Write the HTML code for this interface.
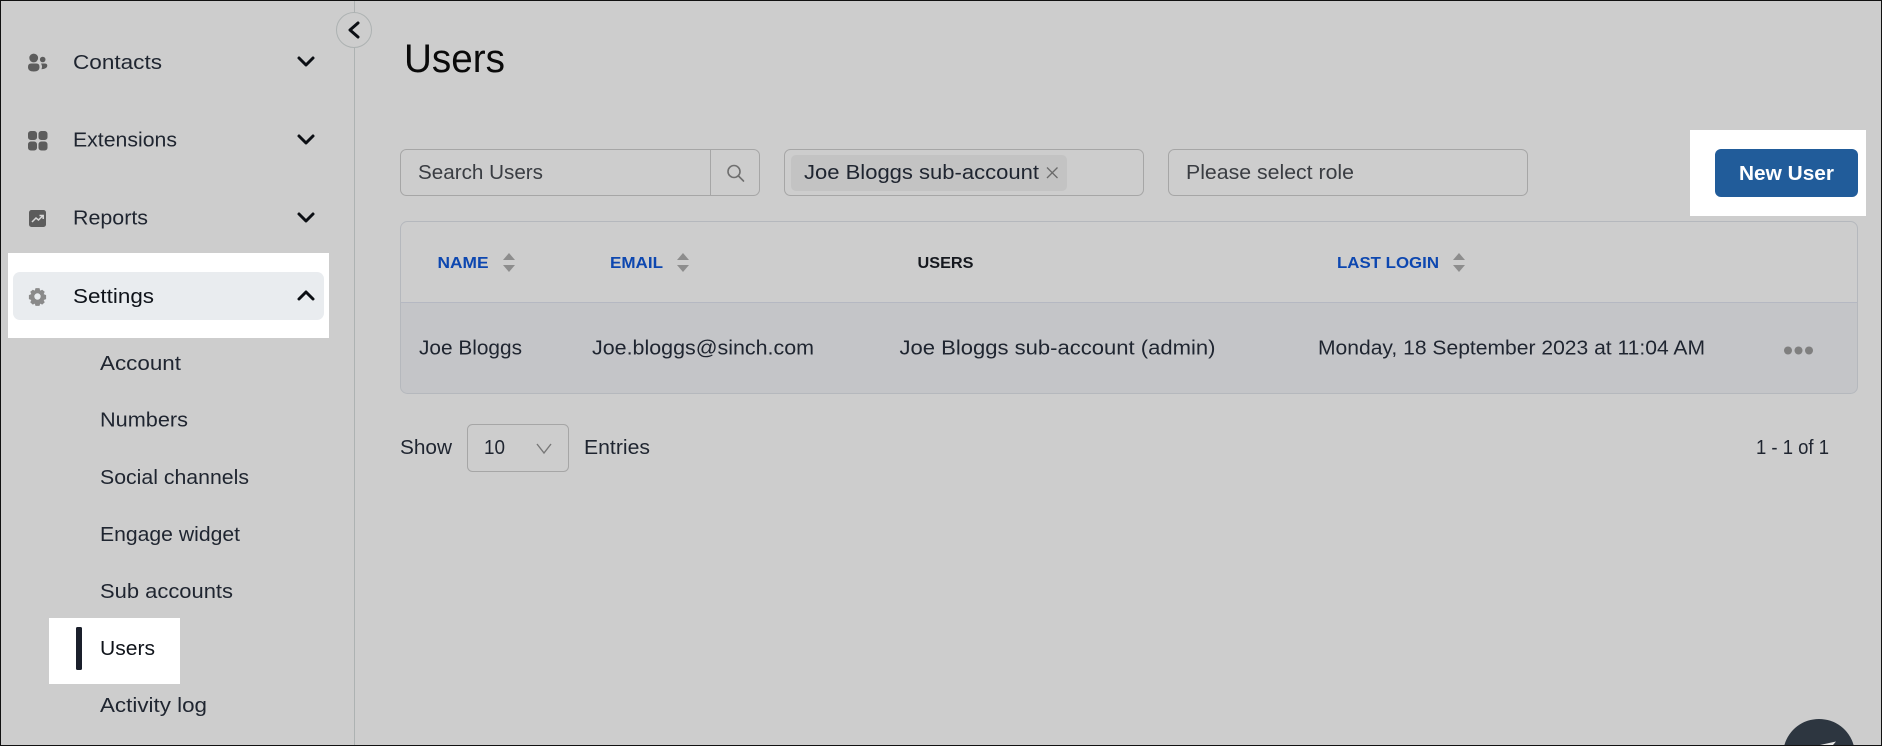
<!DOCTYPE html>
<html lang="en">
<head>
<meta charset="utf-8">
<title>Users</title>
<style>
html,body{margin:0;padding:0;background:#cdcdcd;width:1882px;height:746px;overflow:hidden;}
svg{display:block;overflow:hidden;}
text{font-family:"Liberation Sans",sans-serif;font-size:20px;fill:#1f2530;}
.b{font-weight:700;}
.h{font-size:16px;font-weight:700;fill:#0d47b0;}
</style>
</head>
<body>
<svg xmlns="http://www.w3.org/2000/svg" width="1882" height="746" viewBox="0 0 1882 746">
<rect width="1882" height="746" fill="#cdcdcd"/>

<!-- sidebar divider -->
<rect x="354" y="0" width="1" height="746" fill="#adb2b2"/>
<circle cx="354" cy="30" r="17.5" fill="#cdcdcd" stroke="#adb2b2"/>
<path d="M358 23l-8 7 8 7" fill="none" stroke="#0c0f14" stroke-width="3" stroke-linecap="round" stroke-linejoin="round"/>

<!-- highlights -->
<rect x="8" y="253" width="321" height="85" fill="#fff"/>
<rect x="13" y="272" width="311" height="48" rx="7" fill="#e9ecef"/>
<rect x="49" y="618" width="131" height="66" fill="#fff"/>
<rect x="76" y="627" width="6" height="43" rx="1.5" fill="#1a1f2b"/>
<rect x="1690" y="130" width="176" height="86" fill="#fff"/>

<!-- sidebar icons -->
<g fill="#5c5c5c">
  <circle cx="33.700" cy="58" r="4.400"/>
  <path d="M28 67q0-3.500 3-3.500h5.500q3 0 3 3.500q0 4.500-5.750 4.500t-5.750-4.500z"/>
  <circle cx="42.700" cy="59.500" r="2.800"/>
  <path d="M41 63.500h3.500q2.800 0 2.800 2.200q0 3-5.800 3.500q1.200-3-.5-5.700z"/>
  <rect x="28" y="131" width="9" height="9" rx="2.800"/>
  <rect x="38.500" y="131" width="9" height="9" rx="2.800"/>
  <rect x="28" y="141.500" width="9" height="9" rx="2.800"/>
  <rect x="38.500" y="141.500" width="9" height="9" rx="2.800"/>
  <rect x="29" y="210" width="17" height="17" rx="2.500"/>
</g>
<path d="M32 222l4-4 2.500 2 4.500-4.500M39.500 215.500h3.700v3.500" fill="none" stroke="#d8d8d8" stroke-width="1.500"/>
<g transform="translate(37.500 296.500)">
  <path d="M-2-8.400h4l.7 2.500 2-.9 2.500 2.100-1 2.300 2.400 1v4l-2.400.9 1 2.400-2.500 2.200-2-1-.7 2.300h-4l-.7-2.300-2 1-2.500-2.200 1-2.400-2.400-.9v-4l2.400-1-1-2.300 2.500-2.100 2 .9z" fill="#8a8a8a"/>
  <circle cx="0" cy="0" r="3.200" fill="#e9ecef"/>
</g>

<!-- sidebar chevrons -->
<g fill="none" stroke="#0c0f14" stroke-width="3" stroke-linecap="round" stroke-linejoin="round">
  <path d="M299 58l7 7 7-7"/>
  <path d="M299 136l7 7 7-7"/>
  <path d="M299 214l7 7 7-7"/>
  <path d="M299 299l7-7 7 7"/>
</g>

<!-- sidebar text -->
<text x="73" y="69" textLength="89" lengthAdjust="spacingAndGlyphs">Contacts</text>
<text x="73" y="146.500" textLength="104" lengthAdjust="spacingAndGlyphs">Extensions</text>
<text x="73" y="224.500" textLength="75" lengthAdjust="spacingAndGlyphs">Reports</text>
<text x="73" y="303" textLength="81" lengthAdjust="spacingAndGlyphs" style="fill:#0f131a">Settings</text>
<text x="100" y="370" textLength="81" lengthAdjust="spacingAndGlyphs">Account</text>
<text x="100" y="426.500" textLength="88" lengthAdjust="spacingAndGlyphs">Numbers</text>
<text x="100" y="484" textLength="149" lengthAdjust="spacingAndGlyphs">Social channels</text>
<text x="100" y="541" textLength="140" lengthAdjust="spacingAndGlyphs">Engage widget</text>
<text x="100" y="598" textLength="133" lengthAdjust="spacingAndGlyphs">Sub accounts</text>
<text x="100" y="655" textLength="55" lengthAdjust="spacingAndGlyphs" style="fill:#0f131a">Users</text>
<text x="100" y="712" textLength="107" lengthAdjust="spacingAndGlyphs">Activity log</text>

<!-- title -->
<text x="404" y="72" textLength="101" lengthAdjust="spacingAndGlyphs" style="font-size:40px;fill:#0a0a0a">Users</text>

<!-- search -->
<rect x="400.500" y="149.500" width="359" height="46" rx="6" fill="none" stroke="#a6a6a6"/>
<rect x="710" y="150" width="1" height="45" fill="#a6a6a6"/>
<text x="418" y="179" textLength="125" lengthAdjust="spacingAndGlyphs" style="fill:#3a3d42">Search Users</text>
<g fill="none" stroke="#6f6f6f" stroke-width="1.600" stroke-linecap="round">
  <circle cx="734" cy="171.500" r="6"/>
  <path d="M738.500 176l5 5"/>
</g>

<!-- tag filter -->
<rect x="784.500" y="149.500" width="359" height="46" rx="6" fill="none" stroke="#a6a6a6"/>
<rect x="791" y="155" width="276" height="36" rx="5" fill="#c3c3c3"/>
<text x="804" y="179" textLength="235" lengthAdjust="spacingAndGlyphs">Joe Bloggs sub-account</text>
<path d="M1047 167.500l10.500 10.500M1057.500 167.500l-10.500 10.500" fill="none" stroke="#6a6a6a" stroke-width="1.300"/>

<!-- role -->
<rect x="1168.500" y="149.500" width="359" height="46" rx="6" fill="none" stroke="#a6a6a6"/>
<text x="1186" y="179" textLength="168" lengthAdjust="spacingAndGlyphs" style="fill:#3a3d42">Please select role</text>

<!-- new user -->
<rect x="1715" y="149" width="143" height="48" rx="6" fill="#215c9a"/>
<text x="1739" y="180" class="b" textLength="95" lengthAdjust="spacingAndGlyphs" style="fill:#fff">New User</text>

<!-- table -->
<path d="M401 302.500H1857.500V386.500a7 7 0 0 1-7 7H407.500a7 7 0 0 1-6.500-7z" fill="#c4c5c8"/>
<rect x="400.500" y="221.500" width="1457" height="172" rx="7" fill="none" stroke="#b5b8bd"/>
<rect x="401" y="302" width="1456" height="1" fill="#b5b8c2"/>

<text x="437.500" y="268" class="h" textLength="51" lengthAdjust="spacingAndGlyphs">NAME</text>
<text x="610" y="268" class="h" textLength="53" lengthAdjust="spacingAndGlyphs">EMAIL</text>
<text x="917.500" y="268" class="h" textLength="56" lengthAdjust="spacingAndGlyphs" style="fill:#15181e">USERS</text>
<text x="1337" y="268" class="h" textLength="102" lengthAdjust="spacingAndGlyphs">LAST LOGIN</text>
<g fill="#8d8d8d">
  <path d="M509 253l6 7h-12zM503 265h12l-6 7z"/>
  <path d="M683 253l6 7h-12zM677 265h12l-6 7z"/>
  <path d="M1459 253l6 7h-12zM1453 265h12l-6 7z"/>
</g>

<text x="419" y="354.500" textLength="103" lengthAdjust="spacingAndGlyphs">Joe Bloggs</text>
<text x="592" y="354.500" textLength="222" lengthAdjust="spacingAndGlyphs">Joe.bloggs@sinch.com</text>
<text x="899.500" y="354.500" textLength="316" lengthAdjust="spacingAndGlyphs">Joe Bloggs sub-account (admin)</text>
<text x="1318" y="354.500" textLength="387" lengthAdjust="spacingAndGlyphs">Monday, 18 September 2023 at 11:04 AM</text>
<g fill="#7f7f7f">
  <circle cx="1788" cy="350.500" r="4"/>
  <circle cx="1798.500" cy="350.500" r="4"/>
  <circle cx="1809" cy="350.500" r="4"/>
</g>

<!-- pagination -->
<text x="400" y="454" textLength="52" lengthAdjust="spacingAndGlyphs">Show</text>
<rect x="467.500" y="424.500" width="101" height="47" rx="5" fill="none" stroke="#a6a6a6"/>
<text x="484" y="454" textLength="21" lengthAdjust="spacingAndGlyphs">10</text>
<path d="M537 444l7 9 7-9" fill="none" stroke="#777" stroke-width="1.400"/>
<text x="584" y="454" textLength="66" lengthAdjust="spacingAndGlyphs">Entries</text>
<text x="1756" y="454" textLength="73" lengthAdjust="spacingAndGlyphs">1 - 1 of 1</text>

<!-- chat widget -->
<path d="M1784.400 745A36 36 0 0 1 1853.600 745z" fill="#2d3640"/>
<path d="M1820 745l16-3.500-3 3.500z" fill="#e8e8e8"/>

<!-- screenshot border -->
<rect x="0.500" y="0.500" width="1881" height="745" fill="none" stroke="#111"/>
</svg>
</body>
</html>
